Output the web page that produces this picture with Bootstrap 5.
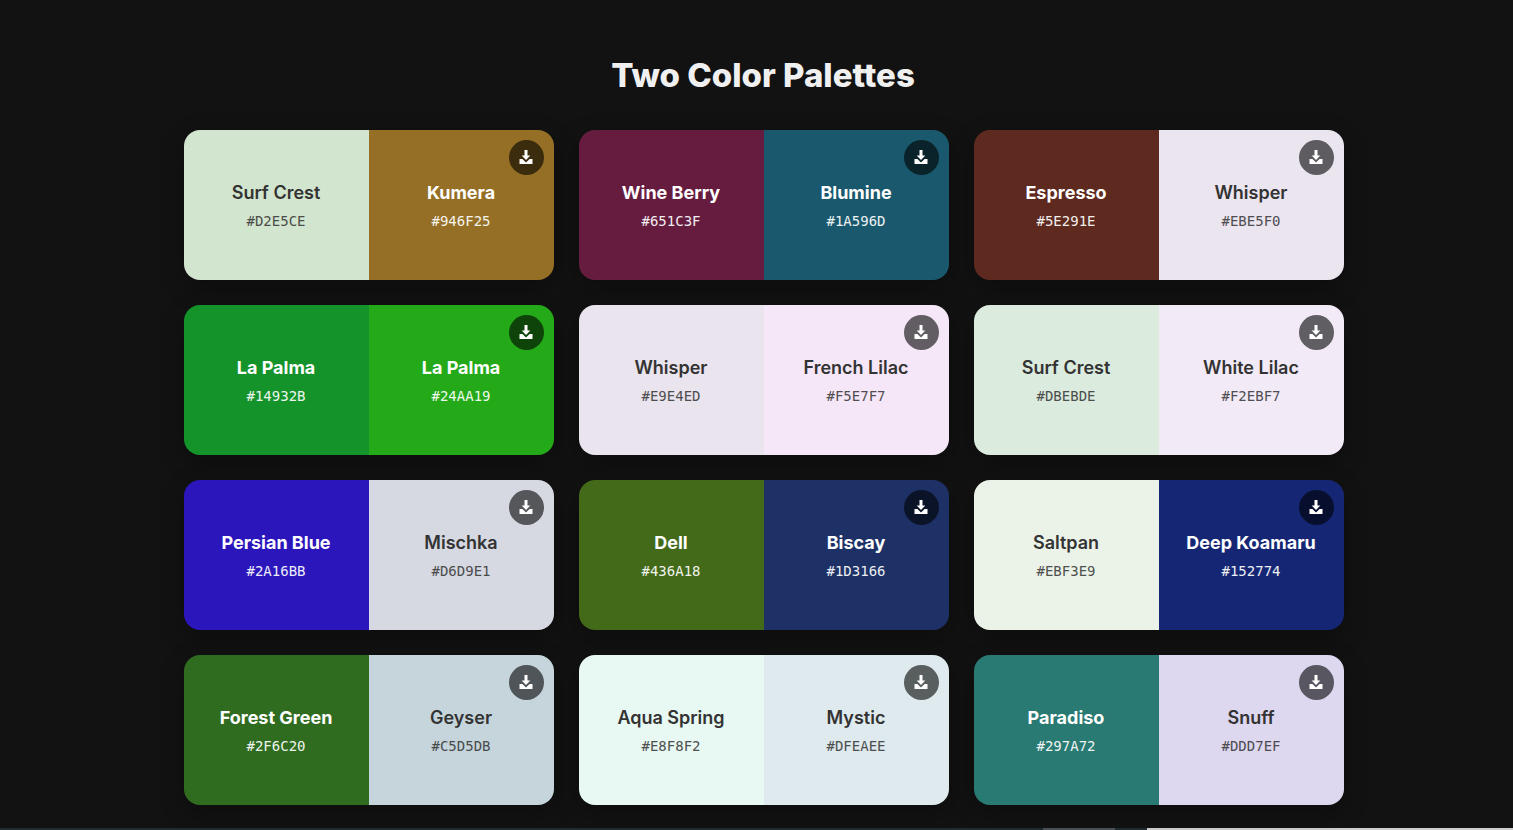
<!DOCTYPE html>
<html lang="en"><head><meta charset="utf-8"><title>Two Color Palettes</title>
<link href="https://cdn.jsdelivr.net/npm/bootstrap@5.3.0/dist/css/bootstrap.min.css" rel="stylesheet">
<style>
html,body{height:830px;overflow:hidden}
body{background:#121212;font-family:Inter,"Liberation Sans",sans-serif;padding-left:15px}
.page-title{font-size:33px;font-weight:800;line-height:46px;color:#f0f0f0;text-align:center;margin:0;padding:52px 2px 0 0;margin-bottom:32px}
.pal-grid{display:grid;grid-template-columns:repeat(3,370px);gap:25px;justify-content:center}
.pal-card{height:150px;border-radius:16px;overflow:hidden;box-shadow:0 8px 24px rgba(0,0,0,.3)}
.pal-half{width:50%;padding-top:49px}
.pal-name{font-size:18px;font-weight:600;line-height:27px;padding-right:1px}
.pal-hex{font-family:"DejaVu Sans Mono",monospace;font-size:14px;line-height:21px;margin-top:5px;opacity:.85;padding-right:1px}
.on-dark{color:#fff}.on-light{color:#333}
.on-dark .pal-name{font-weight:700}
.on-dark .pal-hex{opacity:.92}
.dl-btn{position:absolute;top:10px;right:10px;width:35px;height:35px;border-radius:50%;background:rgba(0,0,0,.6);padding:0 1px 0 0;border:0}
.dl-btn svg{width:14px;height:15px;fill:#fff;display:block}
.edge-strip{height:2px;margin:23px 0 0 -15px}
.edge-a{flex:0 0 1043px;background:#1f2d33}
.edge-b{flex:0 0 72px;background:#4a5258}
.edge-c{flex:0 0 32px;background:#1f2d33}
.edge-d{flex:1;background:#cfcfcf}
</style></head><body>
<h1 class="page-title">Two Color Palettes</h1>
<div class="pal-grid" id="g"></div>
<div class="edge-strip d-flex"><div class="edge-a"></div><div class="edge-b"></div><div class="edge-c"></div><div class="edge-d"></div></div>
<script>
const P=[["Surf Crest","D2E5CE","Kumera","946F25"],["Wine Berry","651C3F","Blumine","1A596D"],["Espresso","5E291E","Whisper","EBE5F0"],["La Palma","14932B","La Palma","24AA19"],["Whisper","E9E4ED","French Lilac","F5E7F7"],["Surf Crest","DBEBDE","White Lilac","F2EBF7"],["Persian Blue","2A16BB","Mischka","D6D9E1"],["Dell","436A18","Biscay","1D3166"],["Saltpan","EBF3E9","Deep Koamaru","152774"],["Forest Green","2F6C20","Geyser","C5D5DB"],["Aqua Spring","E8F8F2","Mystic","DFEAEE"],["Paradiso","297A72","Snuff","DDD7EF"]];
const lum=h=>{const n=parseInt(h,16);return(.299*(n>>16)+.587*(n>>8&255)+.114*(n&255))};
const half=(n,h)=>`<div class="pal-half text-center ${lum(h)>150?'on-light':'on-dark'}" style="background:#${h}"><div class="pal-name">${n}</div><div class="pal-hex">#${h}</div></div>`;
document.getElementById('g').innerHTML=P.map(p=>`<div class="pal-card d-flex position-relative">${half(p[0],p[1])}${half(p[2],p[3])}<button class="dl-btn d-flex align-items-center justify-content-center" aria-label="Download"><svg viewBox="0 0 14 15"><path d="M5.5 0h3v5.5h2.8L7 10 2.7 5.5h2.8z"/><path d="M0.5 9h2.9L7 12.4 10.6 9h2.9v5H.5z"/></svg></button></div>`).join('');
</script>
<script src="https://cdn.jsdelivr.net/npm/bootstrap@5.3.0/dist/js/bootstrap.bundle.min.js"></script>
</body></html>
